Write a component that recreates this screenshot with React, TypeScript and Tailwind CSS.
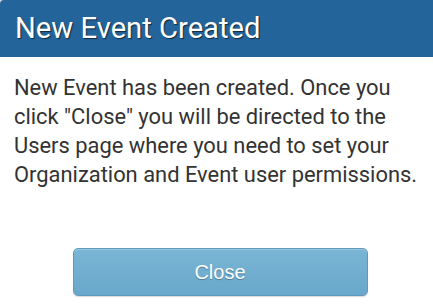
export default function App() {
  return (
    <div className="w-[433px] h-[307px] bg-[#d8d8d8] overflow-hidden">
      <div className="w-full h-full bg-white rounded-tl-[4px] overflow-hidden flex flex-col">
        <div className="h-[57px] bg-[#23649b] flex items-center pl-[15px] pt-[1px]">
          <h1
            className="text-white text-[29.2px] leading-none font-normal [text-shadow:1px_1px_1px_rgba(0,0,0,0.6)]"
            style={{ fontFamily: "Roboto, sans-serif" }}
          >
            New Event Created
          </h1>
        </div>
        <div className="pt-[16px] pl-[14px] pr-[6px]">
          <p
            className="text-[#333333] text-[21.9px] leading-[29px]"
            style={{ fontFamily: "Roboto, sans-serif" }}
          >
            New Event has been created. Once you click "Close" you will be directed to the Users page where you need to set your Organization and Event user permissions.
          </p>
        </div>
        <div className="flex justify-center pt-[59px] pl-[7px]">
          <button
            className="w-[295px] h-[48px] rounded-[5px] border border-[#5d9abd] bg-gradient-to-b from-[#79b5d5] to-[#69a8cb] text-white text-[20px] shadow-[inset_0_1px_0_rgba(255,255,255,0.25),0_1px_1px_rgba(0,0,0,0.15)] [text-shadow:0_1px_1px_rgba(0,0,0,0.3)]"
            style={{ fontFamily: '"Liberation Sans", Arial, sans-serif' }}
          >
            Close
          </button>
        </div>
      </div>
    </div>
  );
}
